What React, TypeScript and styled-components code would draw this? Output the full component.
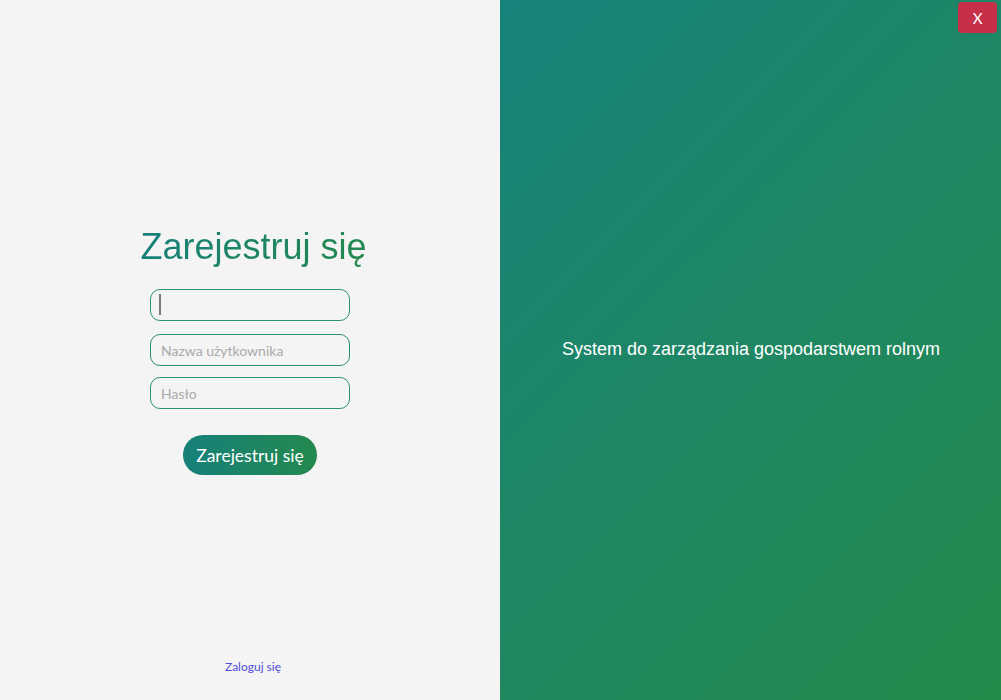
import React from "react";
import styled, { createGlobalStyle } from "styled-components";

const GlobalStyle = createGlobalStyle`
  html, body {
    margin: 0;
    padding: 0;
    height: 100%;
  }
  #root {
    height: 100%;
  }
`;

const Page = styled.div`
  display: grid;
  grid-template-columns: 500px 1fr;
  width: 1001px;
  height: 700px;
  overflow: hidden;
`;

const FormSide = styled.div`
  background-color: #f4f4f4;
  display: flex;
  flex-direction: column;
  align-items: center;
`;

const Form = styled.form`
  display: flex;
  flex-direction: column;
  align-items: center;
  margin-top: 226px;
`;

const Title = styled.h1`
  margin: 0 0 21px 7px;
  font-family: "Liberation Sans", Arial, sans-serif;
  font-weight: 400;
  font-size: 36px;
  line-height: 42px;
  background: linear-gradient(90deg, #16807a, #23894f);
  -webkit-background-clip: text;
  background-clip: text;
  color: transparent;
`;

const FieldWrap = styled.div<{ $gap: number }>`
  position: relative;
  margin-bottom: ${({ $gap }) => $gap}px;
`;

const Field = styled.input`
  display: block;
  box-sizing: border-box;
  width: 200px;
  height: 32px;
  padding: 0 10px;
  border: 1px solid #2a8f78;
  border-radius: 10px;
  background: transparent;
  font-family: Lato, "Open Sans", sans-serif;
  font-size: 14px;
  color: #333;
  caret-color: transparent;
  outline: none;

  &::placeholder {
    color: #ababab;
  }
`;

const Caret = styled.span`
  position: absolute;
  left: 9px;
  top: 5px;
  width: 2px;
  height: 21px;
  background-color: #7a7a7a;
  pointer-events: none;
`;

const Submit = styled.button`
  margin-top: 13px;
  width: 134px;
  height: 40px;
  border: none;
  border-radius: 20px;
  background: linear-gradient(90deg, #16807a, #24894e);
  color: #ffffff;
  font-family: Lato, "Open Sans", sans-serif;
  font-size: 17.5px;
  cursor: pointer;
`;

const LoginLink = styled.a`
  margin-top: auto;
  margin-bottom: 26px;
  margin-left: 6px;
  font-family: Lato, "Open Sans", sans-serif;
  font-size: 12px;
  color: #4d4dd6;
  text-decoration: none;
  cursor: pointer;
`;

const InfoSide = styled.div`
  background: linear-gradient(135deg, #16837b 0%, #1f8763 50%, #248a4b 100%);
  display: flex;
  align-items: center;
  justify-content: center;
  position: relative;
`;

const Tagline = styled.p`
  margin: 0 0 1px 1px;
  font-family: "Liberation Sans", Arial, sans-serif;
  font-size: 18px;
  color: #ffffff;
`;

const CloseButton = styled.button`
  position: absolute;
  top: 2px;
  right: 4px;
  width: 39px;
  height: 31px;
  border: none;
  border-radius: 4px;
  background-color: #c72f48;
  color: #ffffff;
  font-family: Lato, "Open Sans", sans-serif;
  font-size: 15px;
  cursor: pointer;
`;

const App: React.FC = () => {
  return (
    <>
      <GlobalStyle />
      <Page>
        <FormSide>
          <Form onSubmit={(e) => e.preventDefault()}>
            <Title>Zarejestruj się</Title>
            <FieldWrap $gap={13}>
              <Field type="text" />
              <Caret />
            </FieldWrap>
            <FieldWrap $gap={11}>
              <Field type="text" placeholder="Nazwa użytkownika" />
            </FieldWrap>
            <FieldWrap $gap={13}>
              <Field type="password" placeholder="Hasło" />
            </FieldWrap>
            <Submit type="submit">Zarejestruj się</Submit>
          </Form>
          <LoginLink>Zaloguj się</LoginLink>
        </FormSide>
        <InfoSide>
          <Tagline>System do zarządzania gospodarstwem rolnym</Tagline>
          <CloseButton>X</CloseButton>
        </InfoSide>
      </Page>
    </>
  );
};

export default App;
